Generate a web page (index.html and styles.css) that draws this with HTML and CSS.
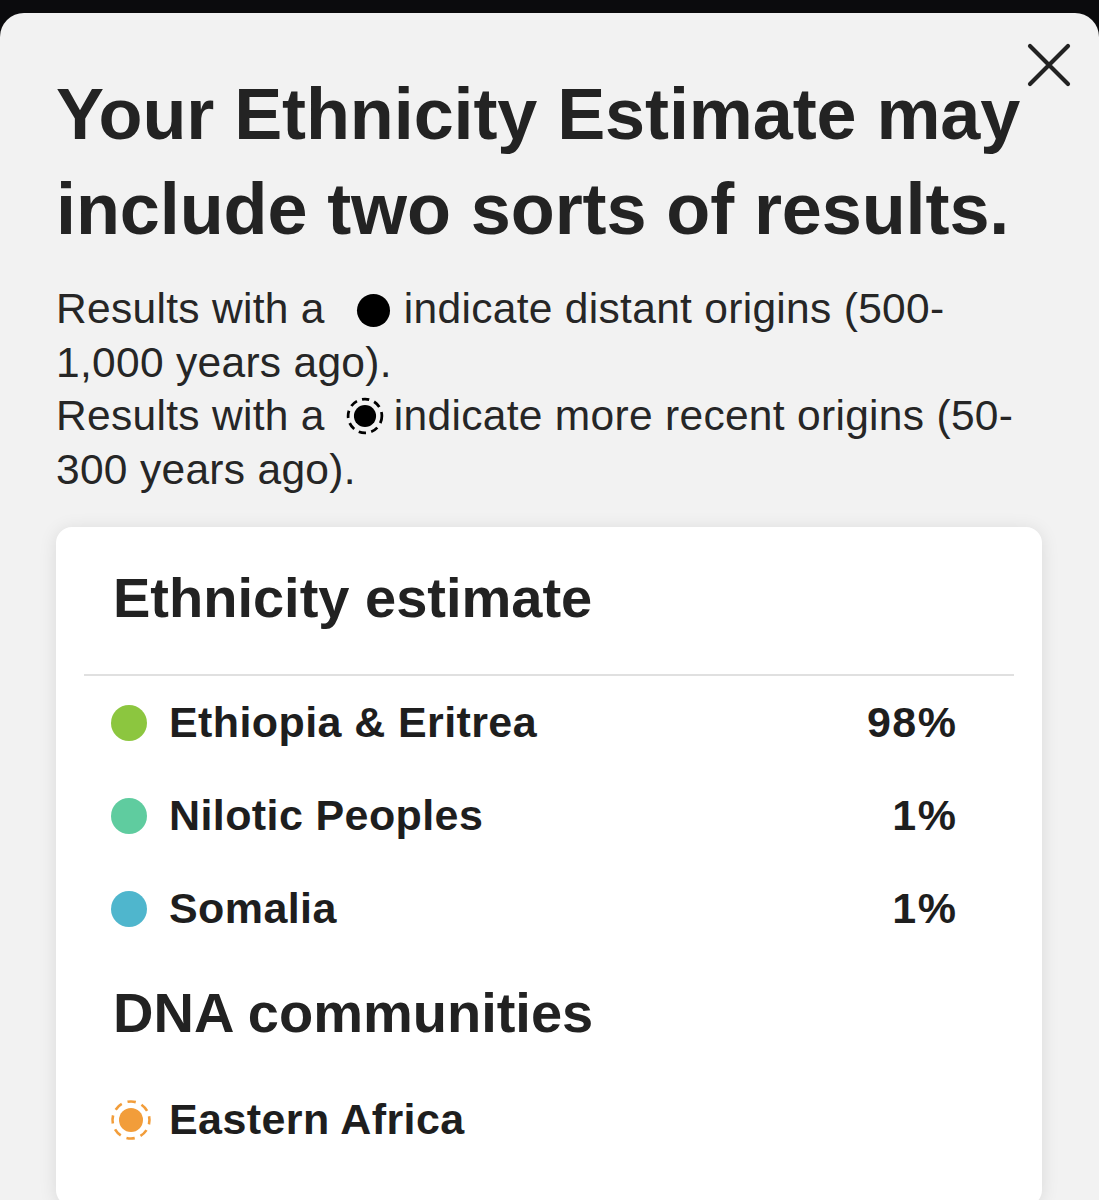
FILE: index.html
```html
<!DOCTYPE html>
<html lang="en">
<head>
<meta charset="utf-8">
<title>Ethnicity Estimate</title>
<link rel="stylesheet" href="styles.css">
</head>
<body>
<div class="sheet">
  <button class="close" aria-label="Close">
    <svg viewBox="0 0 44 44" width="44" height="44"><path d="M3 3 L41 41 M41 3 L3 41" stroke="#222" stroke-width="4.2" stroke-linecap="round" fill="none"/></svg>
  </button>
  <h1 class="title">Your Ethnicity Estimate may include two sorts of results.</h1>
  <p class="intro">Results with a <svg class="dot-solid" viewBox="0 0 36 36" width="36" height="36"><circle cx="18" cy="18" r="17" fill="#000"/></svg>indicate distant origins (500-<br>1,000 years ago).<br>Results with a <svg class="dot-ring" viewBox="0 0 36 36" width="36" height="36"><circle cx="18" cy="18" r="16" fill="none" stroke="#000" stroke-width="2.6" stroke-dasharray="7 5"/><circle cx="18" cy="18" r="10.5" fill="#000"/></svg>indicate more recent origins (50-<br>300 years ago).</p>

  <section class="card">
    <h2 class="card-title">Ethnicity estimate</h2>
    <div class="divider"></div>
    <ul class="list">
      <li class="row"><span class="dot green"></span><span class="name">Ethiopia &amp; Eritrea</span><span class="pct">98%</span></li>
      <li class="row"><span class="dot teal"></span><span class="name">Nilotic Peoples</span><span class="pct">1%</span></li>
      <li class="row"><span class="dot blue"></span><span class="name">Somalia</span><span class="pct">1%</span></li>
    </ul>
    <h2 class="card-title sub">DNA communities</h2>
    <ul class="list">
      <li class="row"><svg class="ring-icon" viewBox="0 0 42 42" width="42" height="42"><circle cx="21" cy="21" r="18.5" fill="none" stroke="#f29d3a" stroke-width="2.6" stroke-dasharray="8.3 6.2" transform="rotate(-12 21 21)"/><circle cx="21" cy="21" r="12" fill="#f29d3a"/></svg><span class="name">Eastern Africa</span></li>
    </ul>
  </section>
</div>
</body>
</html>
```

FILE: styles.css
```css
html, body {
  margin: 0;
  padding: 0;
  background: #0b0b0d;
}
body {
  font-family: "Liberation Sans", Arial, Helvetica, sans-serif;
  color: #222;
  height: 1200px;
  overflow: hidden;
}
.sheet {
  position: relative;
  margin-top: 13px;
  background: #f2f2f2;
  border-radius: 24px 24px 0 0;
  padding: 54px 56px 0 56px;
  height: 1200px;
  box-sizing: border-box;
}
.close {
  position: absolute;
  top: 29px;
  right: 27px;
  width: 46px;
  height: 46px;
  padding: 1px;
  border: 0;
  background: transparent;
}
.close svg { display: block; }
.title {
  margin: 0;
  font-size: 72px;
  font-weight: 700;
  line-height: 95px;
  letter-spacing: -0.1px;
  color: #232323;
  width: 990px;
}
.intro {
  margin: 25px 0 0 0;
  font-size: 42.5px;
  line-height: 53.5px;
  color: #262626;
  letter-spacing: 0.3px;
  width: 1000px;
  white-space: nowrap;
}
.dot-solid {
  display: inline-block;
  vertical-align: -5px;
  width: 35px;
  height: 35px;
  margin: 0 13px 0 19px;
}
.dot-ring {
  display: inline-block;
  vertical-align: -5px;
  width: 38px;
  height: 38px;
  margin: 0 10px 0 9px;
}
.card {
  margin-top: 31px;
  background: #fff;
  border-radius: 16px;
  box-shadow: 0 2px 18px rgba(0,0,0,0.10);
  padding: 36px 0 40px 0;
  width: 986px;
}
.card-title {
  margin: 0;
  padding-left: 57px;
  font-size: 56px;
  font-weight: 700;
  line-height: 70px;
  color: #222;
}
.card-title.sub {
  margin-top: 23px;
}
.divider {
  height: 2px;
  background: #e0e0e0;
  margin: 41px 28px 0 28px;
}
.list {
  list-style: none;
  margin: 0;
  padding: 0;
}
.row {
  display: flex;
  align-items: center;
  height: 93px;
  padding: 0 86px 0 55px;
  font-size: 43px;
  font-weight: 700;
  letter-spacing: 0.4px;
  color: #1e1e1e;
}
.sub + .list .row {
  margin-top: 25px;
}
.dot {
  width: 36px;
  height: 36px;
  border-radius: 50%;
  flex: none;
  margin-right: 22px;
}
.green { background: #8cc63f; }
.teal { background: #5fcc9f; }
.blue { background: #4fb6cd; }
.ring-icon {
  flex: none;
  margin: 0 17px 0 -1px;
}
.name { flex: 1; }
.pct {
  text-align: right;
  letter-spacing: 1.5px;
  margin-right: -1.5px;
}
```
